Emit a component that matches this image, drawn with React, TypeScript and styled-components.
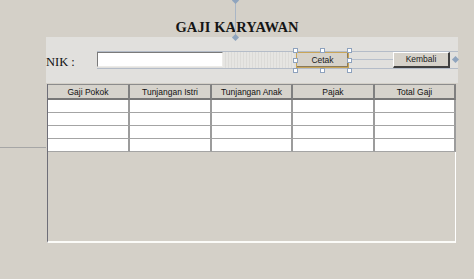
import React from 'react';
import styled, {createGlobalStyle} from 'styled-components';

const Global = createGlobalStyle`
body {
  margin: 0;
  background: #d4d0c8;
}
`

const Frame = styled.div`
position: relative;
width: 474px;
height: 279px;
background: #d4d0c8;
overflow: hidden;
font-family: "Liberation Sans", Arial, sans-serif;
`

const TitleBar = styled.div`
height: 37px;
box-sizing: border-box;
padding-bottom: 1px;
display: flex;
align-items: flex-end;
justify-content: center;
`

const Title = styled.h1`
margin: 0;
line-height: 17px;
font-family: "Liberation Serif", "Times New Roman", serif;
font-weight: bold;
font-size: 14.5px;
letter-spacing: 0.1px;
color: #151515;
`

const GuideV = styled.div`
position: absolute;
left: 235px;
top: 0;
width: 1px;
height: 40px;
background: #a9b6c6;
`

const GuideH = styled.div`
position: absolute;
left: 0;
top: 147px;
width: 46px;
height: 1px;
background: #a6a6a6;
`

const Marker = styled.div<{x: number; y: number}>`
position: absolute;
left: ${p => p.x}px;
top: ${p => p.y}px;
width: 5px;
height: 5px;
background: #8fa4be;
transform: rotate(45deg);
`

const FormPanel = styled.div`
margin-left: 46px;
width: 412px;
height: 46px;
background: #e1e0dd;
padding-top: 13px;
box-sizing: border-box;
`

const Row = styled.div`
display: flex;
align-items: center;
height: 19px;
`

const Label = styled.span`
width: 51px;
padding-top: 5px;
font-family: "Liberation Serif", "Times New Roman", serif;
font-size: 12.5px;
color: #111;
`

const Track = styled.div`
position: relative;
flex: 1;
display: flex;
align-items: center;
height: 16px;
border-top: 1px solid #b4bcc8;
border-bottom: 1px solid #b4bcc8;
`

const TextField = styled.div`
width: 124px;
height: 13px;
background: #fff;
border-top: 1px solid #7a7a7a;
border-left: 1px solid #7a7a7a;
border-right: 1px solid #ecebe8;
border-bottom: 1px solid #ecebe8;
`

const Filler = styled.div`
width: 71px;
height: 16px;
background: repeating-linear-gradient(90deg, #e6e5e2 0 2px, #dcdbd8 2px 3px);
`

const SelectWrap = styled.div`
position: relative;
margin-left: 2px;
`

const Button = styled.div<{selected?: boolean; w: number}>`
width: ${p => p.w}px;
height: 16px;
box-sizing: border-box;
display: flex;
align-items: center;
justify-content: center;
font-size: 8.5px;
color: #1a1a1a;
background: #d6d2ca;
${p => p.selected
  ? `border: 1px solid #c9a558; box-shadow: inset -1px -1px 0 #8a7a5a;`
  : `border-top: 1px solid #fff; border-left: 1px solid #fff; border-right: 2px solid #404040; border-bottom: 2px solid #404040;`}
`

const Handle = styled.div<{x: number; y: number}>`
position: absolute;
left: ${p => p.x}px;
top: ${p => p.y}px;
width: 3px;
height: 3px;
background: #fff;
border: 1px solid #8ea2bd;
`

const Link = styled.div`
width: 44px;
height: 1px;
background: #b8c0cc;
`

const ScrollPane = styled.div`
margin-left: 47px;
margin-top: 1px;
width: 409px;
height: 159px;
box-sizing: border-box;
border-left: 1px solid #6e6e78;
border-right: 1px solid #fff;
border-bottom: 2px solid #fbfbf8;
background: #d4d0c8;
`

const Grid = styled.div`
display: grid;
grid-template-columns: 82px 82px 81px 82px 81px;
`

const HeadCell = styled.div`
height: 16px;
box-sizing: border-box;
display: flex;
align-items: center;
justify-content: center;
font-size: 8.5px;
color: #111;
background: #d6d3cc;
border-top: 1px solid #8c8c8c;
border-right: 2px solid #808080;
border-bottom: 2px solid #777;
`

const Cell = styled.div`
height: 13px;
box-sizing: border-box;
background: #fff;
border-right: 2px solid #9c9c9c;
border-bottom: 1px solid #a4a4a4;
`

const columns = ['Gaji Pokok', 'Tunjangan Istri', 'Tunjangan Anak', 'Pajak', 'Total Gaji'];
const rows = [0, 1, 2, 3];

// resize handles around the selected button: [left, top]
const handles = [[-3, -4], [24, -4], [51, -4], [-3, 6], [51, 6], [-3, 16], [24, 16], [51, 16]];

export default function App() {
  return (
    <Frame>
      <Global />
      <TitleBar>
        <Title>GAJI KARYAWAN</Title>
      </TitleBar>
      <GuideV />
      <Marker x={233} y={-2} />
      <Marker x={233} y={35} />
      <GuideH />

      <FormPanel>
        <Row>
          <Label>NIK :</Label>
          <Track>
            <TextField />
            <Filler />
            <SelectWrap>
              <Button selected w={53}>Cetak</Button>
              {handles.map(([x, y]) => <Handle key={x + ',' + y} x={x} y={y} />)}
            </SelectWrap>
            <Link />
            <Button w={57}>Kembali</Button>
            <Marker x={356} y={5} />
          </Track>
        </Row>
      </FormPanel>

      <ScrollPane>
        <Grid>
          {columns.map(c => <HeadCell key={c}>{c}</HeadCell>)}
          {rows.map(r => columns.map(c => <Cell key={r + c} />))}
        </Grid>
      </ScrollPane>
    </Frame>
  );
}
